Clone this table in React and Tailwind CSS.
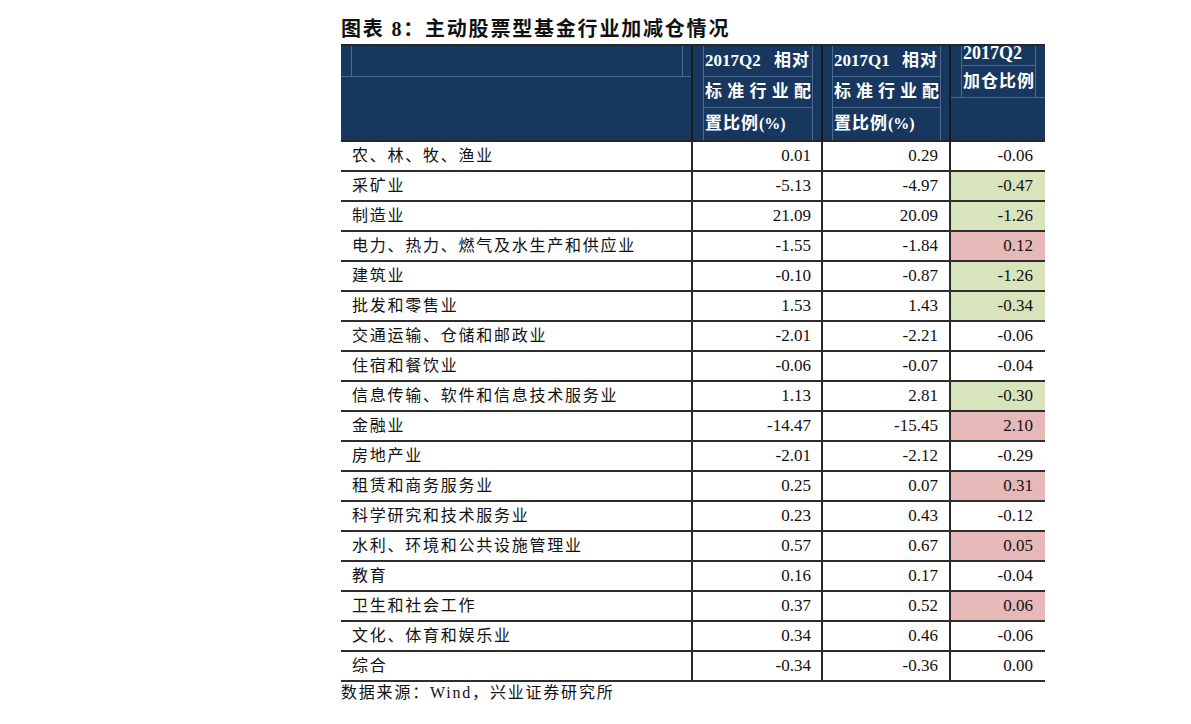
import React from "react";

const rows = [
  ["农、林、牧、渔业", "0.01", "0.29", "-0.06", null],
  ["采矿业", "-5.13", "-4.97", "-0.47", "g"],
  ["制造业", "21.09", "20.09", "-1.26", "g"],
  ["电力、热力、燃气及水生产和供应业", "-1.55", "-1.84", "0.12", "r"],
  ["建筑业", "-0.10", "-0.87", "-1.26", "g"],
  ["批发和零售业", "1.53", "1.43", "-0.34", "g"],
  ["交通运输、仓储和邮政业", "-2.01", "-2.21", "-0.06", null],
  ["住宿和餐饮业", "-0.06", "-0.07", "-0.04", null],
  ["信息传输、软件和信息技术服务业", "1.13", "2.81", "-0.30", "g"],
  ["金融业", "-14.47", "-15.45", "2.10", "r"],
  ["房地产业", "-2.01", "-2.12", "-0.29", null],
  ["租赁和商务服务业", "0.25", "0.07", "0.31", "r"],
  ["科学研究和技术服务业", "0.23", "0.43", "-0.12", null],
  ["水利、环境和公共设施管理业", "0.57", "0.67", "0.05", "r"],
  ["教育", "0.16", "0.17", "-0.04", null],
  ["卫生和社会工作", "0.37", "0.52", "0.06", "r"],
  ["文化、体育和娱乐业", "0.34", "0.46", "-0.06", null],
  ["综合", "-0.34", "-0.36", "0.00", null],
];

function RatioHeader({ q }) {
  return (
    <div className="flex h-full">
      <div className="flex h-full flex-1 flex-col border-x border-[#4b6a93]">
        <div className="flex h-[31px] items-center justify-between border-b border-[#4b6a93] pl-[1px] pr-[2px]">
          <span>{q}</span>
          <span className="tracking-[1px]">相对</span>
        </div>
        <div className="flex h-[31px] items-center justify-between border-b border-[#4b6a93] pl-[1px] pr-[1px]">
          <span>标</span>
          <span>准</span>
          <span>行</span>
          <span>业</span>
          <span>配</span>
        </div>
        <div className="flex flex-1 items-center pl-[1px]">
          <span className="tracking-[1px]">置比例</span>
          <span className="text-[16px]">(%)</span>
        </div>
      </div>
    </div>
  );
}

export default function App() {
  return (
    <div
      className="h-[724px] w-[1191px] bg-white pl-[341px] pt-[15px] text-[#111]"
      style={{ fontFamily: '"Liberation Serif", "Noto Sans CJK SC", serif' }}
    >
      <div className="text-[20px] font-bold leading-[28px] tracking-[1.8px] text-[#111]">
        图表 8：主动股票型基金行业加减仓情况
      </div>
      <div className="mt-[1px] w-[704px]">
        {/* header */}
        <div className="flex h-[98px] border-y-2 border-[#262626] bg-[#17375e] text-[17px] font-bold text-white">
          <div className="flex w-[352px] flex-col border-r-2 border-[#1a1a1a]">
            <div className="h-[31px] border-b border-[#4b6a93] pl-[10px] pr-[8px]">
              <div className="h-full border-x border-[#4b6a93]" />
            </div>
          </div>
          <div className="w-[130px] border-r-2 border-[#1a1a1a] pl-[10px] pr-[8px]">
            <RatioHeader q="2017Q2" />
          </div>
          <div className="w-[128px] border-r-2 border-[#1a1a1a] pl-[9px] pr-[8px]">
            <RatioHeader q="2017Q1" />
          </div>
          <div className="flex w-[94px] flex-col">
            <div className="h-[52px] border-b border-[#4b6a93] pl-[10px] pr-[9px]">
              <div className="flex h-full flex-col border-x border-[#4b6a93]">
                <div className="flex h-[20px] items-start border-b border-[#4b6a93] pl-[1px] text-[18px] leading-[15px]">
                  2017Q2
                </div>
                <div className="flex flex-1 items-center pl-[1px] tracking-[1px]">
                  加仓比例
                </div>
              </div>
            </div>
          </div>
        </div>
        {/* body */}
        {rows.map(([name, a, b, c, tone], i) => (
          <div key={i} className="flex h-[30px] border-b-2 border-[#2e2e2e]">
            <div className="flex w-[352px] items-center border-r-2 border-[#2a2a2a] pl-[11px] text-[16px] tracking-[1.75px]">
              {name}
            </div>
            <div className="flex w-[130px] items-center justify-end border-r-2 border-[#2a2a2a] pr-[10px] text-[17px]">
              {a}
            </div>
            <div className="flex w-[128px] items-center justify-end border-r-2 border-[#2a2a2a] pr-[11px] text-[17px]">
              {b}
            </div>
            <div
              className={`flex w-[94px] items-center justify-end pr-[12px] text-[17px] ${
                tone === "g" ? "bg-[#d8e4bc]" : tone === "r" ? "bg-[#e6b8b7]" : "bg-white"
              }`}
            >
              {c}
            </div>
          </div>
        ))}
      </div>
      <div className="text-[16px] leading-[22px] tracking-[1.8px]">
        数据来源：Wind，兴业证券研究所
      </div>
    </div>
  );
}
